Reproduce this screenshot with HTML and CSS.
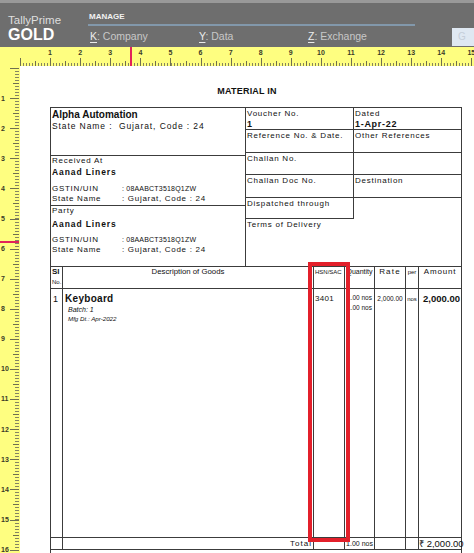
FILE: index.html
```html
<!DOCTYPE html>
<html>
<head>
	<meta charset="utf-8">
	<title>TallyPrime - Material In</title>
	<link rel="stylesheet" href="styles.css">
</head>
<body>
	<div class="topbar">
		<div class="brand">
			<div class="brand-name">TallyPrime</div>
			<div class="brand-edition">GOLD</div>
		</div>
		<div class="menu">
			<div class="menu-title">MANAGE</div>
			<div class="menu-items">
				<span class="menu-item"><u>K</u>: Company</span>
				<span class="menu-item"><u>Y</u>: Data</span>
				<span class="menu-item"><u>Z</u>: Exchange</span>
			</div>
		</div>
		<div class="go-btn">G</div>
	</div>

	<div class="workspace">
		<div class="corner"></div>
		<div class="hruler">
			<span>1</span><span>2</span><span>3</span><span>4</span><span>5</span>
			<span>6</span><span>7</span><span>8</span><span>9</span><span>10</span>
			<span>11</span><span>12</span><span>13</span><span>14</span><span>15</span>
			<div class="hruler-mark"></div>
		</div>
		<div class="vruler">
			<span>1</span><span>2</span><span>3</span><span>4</span><span>5</span><span>6</span>
			<span>7</span><span>8</span><span>9</span><span>10</span><span>11</span><span>12</span>
			<span>13</span><span>14</span><span>15</span><span>16</span>
			<div class="vruler-mark"></div>
		</div>

		<div class="page">
			<div class="doc-title">MATERIAL IN</div>
			<div class="doc">
				<div class="top">
					<div class="parties">
						<div class="cell company">
							<div class="name-lg">Alpha Automation</div>
							<div class="addr">State Name :&nbsp; Gujarat, Code : 24</div>
						</div>
						<div class="cell received">
							<div class="lbl">Received At</div>
							<div class="name">Aanad Liners</div>
							<div class="kv"><span class="k">GSTIN/UIN</span><span class="v v-small">: 08AABCT3518Q1ZW</span></div>
							<div class="kv"><span class="k">State Name</span><span class="v">: Gujarat, Code : 24</span></div>
						</div>
						<div class="cell party">
							<div class="lbl">Party</div>
							<div class="name">Aanad Liners</div>
							<div class="kv"><span class="k">GSTIN/UIN</span><span class="v v-small">: 08AABCT3518Q1ZW</span></div>
							<div class="kv"><span class="k">State Name</span><span class="v">: Gujarat, Code : 24</span></div>
						</div>
					</div>
					<div class="details">
						<div class="det br bb"><div class="lbl">Voucher No.</div><div class="val">1</div></div>
						<div class="det bb"><div class="lbl">Dated</div><div class="val">1-Apr-22</div></div>
						<div class="det br bb"><div class="lbl">Reference No. &amp; Date.</div></div>
						<div class="det bb"><div class="lbl">Other References</div></div>
						<div class="det br bb"><div class="lbl">Challan No.</div></div>
						<div class="det bb"></div>
						<div class="det br bb"><div class="lbl">Challan Doc No.</div></div>
						<div class="det bb"><div class="lbl">Destination</div></div>
						<div class="det br bb"><div class="lbl">Dispatched through</div></div>
						<div class="det"></div>
						<div class="det wide"><div class="lbl">Terms of Delivery</div></div>
					</div>
				</div>

				<div class="items">
					<div class="irow ihead">
						<div class="c-sl"><div class="h-sl">Sl</div><div class="h-no">No.</div></div>
						<div class="c-desc">Description of Goods</div>
						<div class="c-hsn">HSN/SAC</div>
						<div class="c-qty">Quantity</div>
						<div class="c-rate">Rate</div>
						<div class="c-per">per</div>
						<div class="c-amt">Amount</div>
					</div>
					<div class="irow ibody">
						<div class="c-sl">1</div>
						<div class="c-desc">
							<div class="item-name">Keyboard</div>
							<div class="item-batch">Batch: 1</div>
							<div class="item-mfg">Mfg Dt.: Apr-2022</div>
						</div>
						<div class="c-hsn">3401</div>
						<div class="c-qty"><div>1.00 nos</div><div>1.00 nos</div></div>
						<div class="c-rate">2,000.00</div>
						<div class="c-per">nos</div>
						<div class="c-amt">2,000.00</div>
					</div>
					<div class="irow itotal">
						<div class="c-sl"></div>
						<div class="c-desc">Total</div>
						<div class="c-hsn"></div>
						<div class="c-qty">1.00 nos</div>
						<div class="c-rate"></div>
						<div class="c-per"></div>
						<div class="c-amt">&#8377; 2,000.00</div>
					</div>
					<div class="ifoot">
						<span>Amount Chargeable (in words)</span>
						<span class="eoe">E. &amp; O.E</span>
					</div>
				</div>

				<div class="highlight"></div>
			</div>
		</div>
	</div>
</body>
</html>
```

FILE: styles.css
```css
* {
	box-sizing: border-box;
}
body {
	margin: 0;
	width: 474px;
	height: 553px;
	overflow: hidden;
	background: #fff;
	font-family: "Liberation Sans", Arial, sans-serif;
	color: #111;
}

/* top bar */
.topbar {
	display: flex;
	height: 47px;
	background: #6e6e6e;
	border-top: 3px solid #999;
}
.brand {
	width: 88px;
	padding-left: 8px;
}
.brand-name {
	margin-top: 10px;
	font-size: 11.5px;
	line-height: 14px;
	color: #dedede;
}
.brand-edition {
	font-size: 16px;
	line-height: 16px;
	font-weight: bold;
	color: #fff;
}
.menu {
	width: 327px;
	padding-top: 9px;
}
.menu-title {
	padding-left: 1px;
	padding-bottom: 2px;
	border-bottom: 2px solid #8298ab;
	font-size: 8px;
	font-weight: bold;
	line-height: 10px;
	color: #f2f2f2;
}
.menu-items {
	display: flex;
	margin-top: 4px;
}
.menu-item {
	width: 109px;
	padding-left: 2px;
	font-size: 10.5px;
	line-height: 13px;
	color: #c8c8c8;
}
.menu-item u {
	color: #ececec;
	text-underline-offset: 2px;
}
.go-btn {
	margin-left: auto;
	margin-top: 25px;
	width: 22px;
	height: 18px;
	padding-left: 6px;
	background: #dfe8f2;
	color: #c5ced9;
	font-size: 10px;
	line-height: 18px;
}

/* rulers */
.workspace {
	display: grid;
	grid-template-columns: 20px 454px;
	grid-template-rows: 19px 487px;
}
.corner {
	background: #fefe80;
}
.hruler {
	position: relative;
	display: flex;
	padding-left: 15px;
	overflow: hidden;
	background-color: #fefe80;
	background-image:
		repeating-linear-gradient(to right, #6f6f50 0 1px, transparent 1px 30.1px),
		repeating-linear-gradient(to right, transparent 0 15.05px, #6f6f50 15.05px 16.05px, transparent 16.05px 30.1px),
		repeating-linear-gradient(to right, #858560 0 1px, transparent 1px 3.01px);
	background-size: 100% 8px, 100% 5px, 100% 3px;
	background-position: left bottom;
	background-repeat: no-repeat;
}
.hruler span {
	flex: none;
	width: 30.1px;
	padding-top: 2px;
	text-align: center;
	font-size: 7px;
	font-weight: bold;
	line-height: 8px;
	color: #3a3a28;
}
.hruler-mark {
	position: absolute;
	left: 110px;
	top: 0;
	width: 2px;
	height: 100%;
	background: #e2245a;
}
.vruler {
	position: relative;
	display: flex;
	flex-direction: column;
	padding-top: 17px;
	overflow: hidden;
	background-color: #fefe80;
	background-image:
		repeating-linear-gradient(to bottom, #6f6f50 0 1px, transparent 1px 30.1px),
		repeating-linear-gradient(to bottom, transparent 0 15.05px, #6f6f50 15.05px 16.05px, transparent 16.05px 30.1px),
		repeating-linear-gradient(to bottom, #858560 0 1px, transparent 1px 3.01px);
	background-size: 9px 100%, 6px 100%, 4px 100%;
	background-position: right 1px top 2px;
	background-repeat: no-repeat;
}
.vruler span {
	flex: none;
	display: flex;
	align-items: center;
	height: 30.1px;
	padding-left: 1px;
	font-size: 7px;
	font-weight: bold;
	color: #3a3a28;
}
.vruler-mark {
	position: absolute;
	left: 0;
	top: 175px;
	width: 19px;
	height: 2px;
	background: #e2245a;
}

/* printed page */
.page {
	background: #fff;
	overflow: hidden;
}
.doc-title {
	margin-top: 20px;
	height: 10px;
	line-height: 10px;
	text-align: center;
	font-size: 9px;
	font-weight: bold;
	letter-spacing: 0.2px;
}
.doc {
	position: relative;
	width: 412px;
	margin: 11px 0 0 30px;
	border: 1px solid #3c3c3c;
	border-bottom: none;
}
.top {
	display: grid;
	grid-template-columns: 195px 1fr;
	height: 158px;
}
.parties {
	border-right: 1px solid #3c3c3c;
}
.cell {
	padding-left: 1px;
}
.company {
	height: 48px;
	padding-top: 1px;
	border-bottom: 1px solid #3c3c3c;
}
.received {
	height: 50px;
	border-bottom: 1px solid #3c3c3c;
}
.party {
	height: 60px;
}
.name-lg {
	font-size: 10px;
	font-weight: bold;
	line-height: 12px;
}
.addr {
	font-size: 8.5px;
	line-height: 10px;
	letter-spacing: 0.9px;
}
.lbl {
	font-size: 8px;
	line-height: 10px;
	letter-spacing: 0.75px;
	white-space: nowrap;
}
.name {
	margin-bottom: 6px;
	font-size: 8.5px;
	font-weight: bold;
	line-height: 12px;
	letter-spacing: 0.9px;
}
.party .name {
	margin-top: 2px;
	margin-bottom: 5px;
}
.kv {
	display: flex;
	font-size: 8px;
	line-height: 10px;
	letter-spacing: 0.7px;
	white-space: nowrap;
}
.k {
	width: 70px;
}
.v-small {
	font-size: 7px;
	letter-spacing: 0.2px;
}

.details {
	display: grid;
	grid-template-columns: 108px 1fr;
	grid-template-rows: 22px 23px 22px 23px 21px 1fr;
}
.det {
	padding: 1px 0 0 1px;
}
.det.br {
	border-right: 1px solid #3c3c3c;
}
.det.bb {
	border-bottom: 1px solid #3c3c3c;
}
.det.wide {
	grid-column: span 2;
}
.val {
	font-size: 9px;
	font-weight: bold;
	line-height: 11px;
	letter-spacing: 0.7px;
}

/* items table */
.irow {
	display: grid;
	grid-template-columns: 12px 251px 31px 30px 31px 13px 1fr;
}
.irow > div {
	border-right: 1px solid #3c3c3c;
	white-space: nowrap;
}
.irow > div:last-child {
	border-right: none;
}
.ihead {
	height: 23px;
	border-top: 1px solid #3c3c3c;
	border-bottom: 1px solid #3c3c3c;
	line-height: 10px;
}
.ihead .c-sl {
	padding-left: 1px;
}
.h-sl {
	font-size: 8px;
	font-weight: bold;
}
.h-no {
	font-size: 6px;
}
.ihead .c-desc {
	text-align: center;
	font-size: 7.8px;
}
.ihead .c-hsn {
	padding-left: 1px;
	font-size: 6px;
}
.ihead .c-qty {
	text-align: center;
	font-size: 7px;
}
.ihead .c-rate {
	text-align: center;
	font-size: 8px;
	letter-spacing: 1.2px;
}
.ihead .c-per {
	text-align: center;
	font-size: 6px;
}
.ihead .c-amt {
	text-align: center;
	font-size: 8px;
	letter-spacing: 0.8px;
}

.ibody {
	height: 248px;
}
.ibody > div {
	padding-top: 4px;
}
.ibody .c-sl {
	padding-left: 2px;
	font-size: 9px;
	line-height: 12px;
}
.ibody .c-desc {
	padding-left: 2px;
}
.item-name {
	font-size: 10px;
	font-weight: bold;
	line-height: 12px;
	letter-spacing: 0.3px;
}
.item-batch {
	padding-left: 3px;
	font-size: 7px;
	font-style: italic;
	line-height: 9px;
}
.item-mfg {
	padding-left: 3px;
	font-size: 6.2px;
	font-style: italic;
	line-height: 10px;
}
.ibody .c-hsn {
	padding-left: 1px;
	font-size: 8px;
	line-height: 12px;
	letter-spacing: 0.3px;
}
.ibody .c-qty {
	text-align: center;
	font-size: 6.5px;
	line-height: 10px;
}
.ibody .c-rate {
	text-align: center;
	font-size: 6.5px;
	line-height: 12px;
}
.ibody .c-per {
	text-align: center;
	font-size: 6px;
	line-height: 12px;
}
.ibody .c-amt {
	padding-right: 1px;
	text-align: right;
	font-size: 9.5px;
	font-weight: bold;
	line-height: 12px;
}

.itotal {
	height: 13px;
	border-top: 1px solid #3c3c3c;
	border-bottom: 1px solid #3c3c3c;
	line-height: 11px;
}
.itotal .c-desc {
	padding-right: 1px;
	text-align: right;
	font-size: 8px;
	letter-spacing: 1px;
}
.itotal .c-qty {
	text-align: center;
	font-size: 7px;
}
.itotal .c-amt {
	padding-right: 1px;
	text-align: right;
	font-size: 9.5px;
}
.ifoot {
	display: flex;
	justify-content: space-between;
	height: 20px;
	padding: 1px 2px 0 2px;
	font-size: 7px;
	line-height: 10px;
	color: #444;
}
.eoe {
	font-style: italic;
	font-weight: bold;
}

/* red marker drawn over the HSN column */
.highlight {
	position: absolute;
	left: 257px;
	top: 154px;
	width: 42px;
	height: 280px;
	border: 4px solid #e3202b;
}
```
